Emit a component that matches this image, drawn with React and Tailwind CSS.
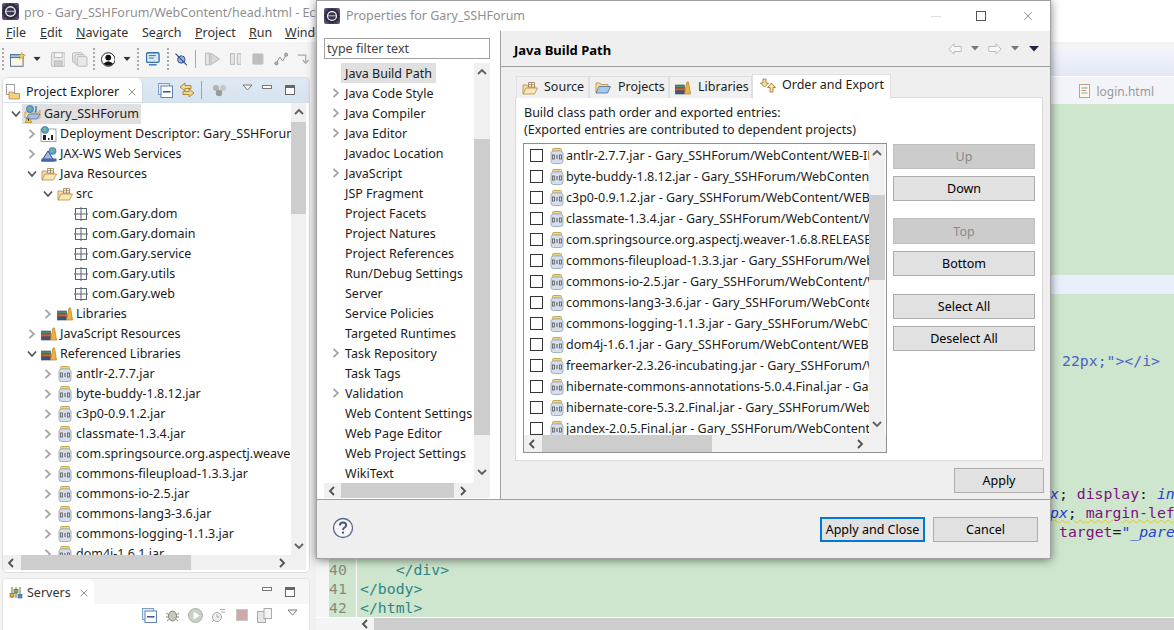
import { X } from 'lucide-react';

// ---------------------------------------------------------------------------
// Icons
// ---------------------------------------------------------------------------

function ChevronRight({ className = '' }) {
  return (
    <svg width="8" height="10" viewBox="0 0 8 10" className={`shrink-0 ${className}`} fill="none">
      <path d="M1.5 1 L6 5 L1.5 9" stroke="#a6a6a6" strokeWidth="1.7" />
    </svg>
  );
}

function ChevronDown({ className = '' }) {
  return (
    <svg width="10" height="8" viewBox="0 0 10 8" className={`shrink-0 ${className}`} fill="none">
      <path d="M1 1.5 L5 6 L9 1.5" stroke="#555" strokeWidth="1.7" />
    </svg>
  );
}

function ArrowGlyph({ dir, dark }) {
  const d = {
    up: 'M1 6 L5 2 L9 6',
    down: 'M1 2 L5 6 L9 2',
    left: 'M6 1 L2 5 L6 9',
    right: 'M2 1 L6 5 L2 9',
  }[dir];
  return (
    <svg width="10" height="10" viewBox="0 0 10 10" fill="none">
      <path d={d} stroke={dark ? '#505050' : '#606060'} strokeWidth="1.8" />
    </svg>
  );
}

function Jar() {
  return (
    <svg width="14" height="16" viewBox="0 0 14 16" className="shrink-0">
      <rect x="2.5" y="0.5" width="9" height="2.5" rx="1" fill="#f0d68a" stroke="#c9a84a" />
      <rect x="1" y="3" width="12" height="12.5" rx="2.5" fill="#d5deea" stroke="#9fb0c6" />
      <rect x="2.5" y="7" width="2" height="4" fill="none" stroke="#555" strokeWidth="0.8" />
      <rect x="6.5" y="7" width="1" height="4" fill="#555" />
      <rect x="9.5" y="7" width="2" height="4" fill="none" stroke="#555" strokeWidth="0.8" />
    </svg>
  );
}

function Books({ className = '' }) {
  return (
    <svg width="16" height="14" viewBox="0 0 16 14" className={`shrink-0 ${className}`}>
      <rect x="0.5" y="4" width="9" height="3" fill="#4a8a78" stroke="#33584f" strokeWidth="0.6" />
      <rect x="0.5" y="7" width="9" height="3" fill="#c0663a" stroke="#7a4126" strokeWidth="0.6" />
      <rect x="0.5" y="10" width="9" height="3" fill="#3b5a88" stroke="#2d4263" strokeWidth="0.6" />
      <path d="M9.5 13 L12 1 L13.5 1 L15.5 13 Z" fill="#eeb243" stroke="#b57d1f" strokeWidth="0.7" />
    </svg>
  );
}

function PackageIcon() {
  return (
    <svg width="14" height="14" viewBox="0 0 14 14" className="shrink-0" fill="none" stroke="#5c6470" strokeWidth="1">
      <rect x="1.5" y="1.5" width="11" height="11" />
      <path d="M7 0 V14 M0 7 H14" />
    </svg>
  );
}

function FolderPkg({ className = '' }) {
  return (
    <svg width="16" height="14" viewBox="0 0 16 14" className={`shrink-0 ${className}`}>
      <path d="M1 13 L1 4 L5 4 L6 5.5 L13 5.5 L13 7 Z" fill="#f4dba4" stroke="#b98d3e" strokeWidth="0.8" />
      <path d="M1 13 L4 7 L15.5 7 L12.5 13 Z" fill="#f8e6b8" stroke="#b98d3e" strokeWidth="0.8" />
      <path d="M6.5 1.5 H12.5 V6 H6.5 Z M9.5 1.5 V6 M6.5 3.7 H12.5" fill="#fff" stroke="#8a6a3a" strokeWidth="0.7" />
    </svg>
  );
}

function Globe({ x = 0, y = 0 }) {
  return (
    <g transform={`translate(${x} ${y})`}>
      <circle cx="4" cy="4" r="3.6" fill="#5a9fd4" stroke="#356a99" strokeWidth="0.6" />
      <path d="M2 2.5 L4.5 2 L5 4 L3 5.5 Z" fill="#7fbf6a" />
    </g>
  );
}

function ProjectIcon() {
  return (
    <svg width="17" height="18" viewBox="0 0 17 18" className="shrink-0">
      <path d="M1 13 L1 7 L6 7 L7 8 L14 8 L16 5 L16 13 Z" fill="#f4dba4" stroke="#b98d3e" strokeWidth="0.7" />
      <path d="M2 14 L5 9 L16 9 L13 14 Z" fill="#a7c0e4" stroke="#4e6f9c" strokeWidth="0.7" />
      <Globe x={2} y={0} />
      <path d="M12 1 V6 Q12 7 10.5 7" stroke="#2e5f9e" strokeWidth="1.2" fill="none" />
      <path d="M4.5 12 L8 17.5 L1 17.5 Z" fill="#f6c33c" stroke="#8a6a10" strokeWidth="0.5" />
      <rect x="4" y="13.5" width="1" height="2.2" fill="#222" />
    </svg>
  );
}

function DescriptorIcon() {
  return (
    <svg width="17" height="16" viewBox="0 0 17 16" className="shrink-0">
      <rect x="1" y="3" width="15" height="12.5" fill="#fff" stroke="#8a8a8a" strokeWidth="0.8" />
      <Globe x={1} y={0} />
      <rect x="3" y="9" width="3" height="5" fill="#222" />
      <rect x="8" y="12" width="1.4" height="2" fill="#222" />
      <rect x="11" y="9" width="2" height="5" fill="#222" />
    </svg>
  );
}

function JaxIcon() {
  return (
    <svg width="16" height="15" viewBox="0 0 16 15" className="shrink-0">
      <path d="M0.5 14 L7 4 L13 14 Z" fill="#9db7df" stroke="#2e4c85" strokeWidth="1" />
      <rect x="0.5" y="11.5" width="15" height="3" fill="#4665a6" />
      <Globe x={7.5} y={0} />
    </svg>
  );
}

function EclipseLogo({ size = 17 }) {
  return (
    <svg width={size} height={size} viewBox="0 0 17 17" className="shrink-0">
      <rect x="0" y="0" width="17" height="17" rx="2" fill="#5a4a80" />
      <circle cx="8.5" cy="8.5" r="7.6" fill="#2f2f3a" strokeDasharray="2 1.4" stroke="#2f2f3a" strokeWidth="1.6" />
      <circle cx="8.5" cy="8.5" r="5.4" fill="#f4f4f4" />
      <circle cx="8.5" cy="8.5" r="4.1" fill="#3a3550" />
      <rect x="3.8" y="7.8" width="9.4" height="1" fill="#c9c9d6" />
    </svg>
  );
}

function Grip({ className = '' }) {
  return <div className={`w-[2px] h-[22px] border-l-2 border-dotted border-[#a8a8a8] ${className}`} />;
}

function MiniDrop({ color = '#333', className = '' }) {
  return (
    <svg width="10" height="6" viewBox="0 0 10 6" className={`shrink-0 ${className}`}>
      <path d="M0 0 H10 L5 5.5 Z" fill={color} />
    </svg>
  );
}

function ViewMenuDrop({ className = '' }) {
  return (
    <svg width="11" height="7" viewBox="0 0 11 7" className={`shrink-0 ${className}`} fill="#fff" stroke="#777">
      <path d="M1 1 H10 L5.5 6 Z" />
    </svg>
  );
}

function MinBtn({ className = '' }) {
  return <div className={`w-[10px] h-[4px] border border-[#777] bg-white ${className}`} />;
}

function MaxBtn({ className = '' }) {
  return <div className={`w-[10px] h-[10px] border border-[#666] border-t-[3px] bg-white ${className}`} />;
}

function CollapseAll({ className = '' }) {
  return (
    <svg width="15" height="15" viewBox="0 0 15 15" className={`shrink-0 ${className}`} fill="none">
      <rect x="0.5" y="0.5" width="11" height="11" fill="#e3ebf5" stroke="#7f9fc6" />
      <rect x="3" y="3" width="11.5" height="11.5" fill="#fff" stroke="#5f82b2" />
      <rect x="5" y="8" width="7.5" height="1.6" fill="#3f5f8f" />
    </svg>
  );
}

function HollowArrow({ flip, className = '' }) {
  return (
    <svg width="14" height="12" viewBox="0 0 14 12" className={`shrink-0 ${flip ? '-scale-x-100' : ''} ${className}`} fill="#f6f6f6" stroke="#bdbdbd">
      <path d="M0.8 6 L6 0.8 V3.5 H13.2 V8.5 H6 V11.2 Z" />
    </svg>
  );
}

// ---------------------------------------------------------------------------
// Main window: left column
// ---------------------------------------------------------------------------

const MENU = [
  ['F', 'ile', 'w-[34px]', ''],
  ['E', 'dit', 'w-[36px]', ''],
  ['N', 'avigate', 'w-[66px]', ''],
  ['Se', 'arch', 'w-[53px]', 'a'],
  ['P', 'roject', 'w-[54px]', ''],
  ['R', 'un', 'w-[36px]', ''],
  ['W', 'indow', 'w-[50px]', ''],
];

const JARS_TREE = [
  'antlr-2.7.7.jar',
  'byte-buddy-1.8.12.jar',
  'c3p0-0.9.1.2.jar',
  'classmate-1.3.4.jar',
  'com.springsource.org.aspectj.weaver-1.6.8.RELEASE.jar',
  'commons-fileupload-1.3.3.jar',
  'commons-io-2.5.jar',
  'commons-lang3-3.6.jar',
  'commons-logging-1.1.3.jar',
  'dom4j-1.6.1.jar',
];

const PACKAGES = ['com.Gary.dom', 'com.Gary.domain', 'com.Gary.service', 'com.Gary.utils', 'com.Gary.web'];

function TreeRow({ indent, arrow, icon, children, selected }) {
  return (
    <div className={`flex items-center h-[20px] whitespace-nowrap ${indent}`}>
      <span className="w-[12px] flex justify-center shrink-0">
        {arrow === 'open' && <ChevronDown />}
        {arrow === 'closed' && <ChevronRight />}
      </span>
      <span className={`flex items-center h-[20px] pl-[2px] pr-[2px] ${selected ? 'bg-[#e0e0e0]' : ''}`}>
        <span className="w-[17px] flex justify-center shrink-0">{icon}</span>
        <span className="ml-[3px]">{children}</span>
      </span>
    </div>
  );
}

function ProjectExplorer() {
  return (
    <div className="ml-[2px] mt-px w-[308px] h-[496px] border border-[#dedede] rounded-[5px] bg-white flex flex-col overflow-hidden">
      <div className="h-[25px] flex bg-gradient-to-b from-[#dfe9f3] to-[#d5e4f0] border-b border-[#d3dfe9] shrink-0">
        <div className="w-[140px] bg-white rounded-tr-[6px] flex items-center pl-[3px] border-r border-[#cddbe6]">
          <svg width="15" height="16" viewBox="0 0 15 16" className="shrink-0 mt-[3px]">
            <rect x="0.5" y="0.5" width="8" height="10" fill="#fff" stroke="#8a8a8a" strokeWidth="0.8" />
            <path d="M3 8 H7 L8 9.5 H13.5 V15 H3 Z" fill="#f3cf83" stroke="#b98d3e" strokeWidth="0.8" />
          </svg>
          <span className="ml-[5px] pt-[4px]">Project Explorer</span>
          <X size={12} strokeWidth={1.3} className="ml-[7px] mt-[3px] text-[#555]" />
        </div>
        <div className="flex items-center flex-1">
          <CollapseAll className="ml-[15px]" />
          <svg width="16" height="16" viewBox="0 0 16 16" className="ml-[6px]" fill="#f3d78f" stroke="#a9802e" strokeWidth="0.9">
            <path d="M1 5 L6 1 V3.5 H12 V6.5 H6 V9 Z" />
            <path d="M15 11 L10 7 V9.5 H4 V12.5 H10 V15 Z" />
          </svg>
          <div className="ml-[6px] w-px h-[18px] bg-[#9aa7b3]" />
          <svg width="15" height="14" viewBox="0 0 15 14" className="ml-[10px]">
            <circle cx="4" cy="5" r="3" fill="#b3b3b3" />
            <circle cx="11" cy="5" r="3" fill="#c7c7c7" />
            <circle cx="7" cy="10" r="3.2" fill="#9a9a9a" />
          </svg>
          <ViewMenuDrop className="ml-[15px] -mt-[6px]" />
          <MinBtn className="ml-[9px] -mt-[6px]" />
          <MaxBtn className="ml-[13px]" />
        </div>
      </div>
      <div className="flex flex-1 min-h-0 pr-[3px]">
        <div className="flex-1 min-w-0 overflow-hidden pl-[7px] pt-[1px]">
          <TreeRow indent="" arrow="open" icon={<ProjectIcon />} selected>Gary_SSHForum</TreeRow>
          <TreeRow indent="ml-[16px]" arrow="closed" icon={<DescriptorIcon />}>Deployment Descriptor: Gary_SSHForum</TreeRow>
          <TreeRow indent="ml-[16px]" arrow="closed" icon={<JaxIcon />}>JAX-WS Web Services</TreeRow>
          <TreeRow indent="ml-[16px]" arrow="open" icon={<FolderPkg />}>Java Resources</TreeRow>
          <TreeRow indent="ml-[32px]" arrow="open" icon={<FolderPkg />}>src</TreeRow>
          {PACKAGES.map((p) => (
            <TreeRow key={p} indent="ml-[48px]" icon={<PackageIcon />}>{p}</TreeRow>
          ))}
          <TreeRow indent="ml-[32px]" arrow="closed" icon={<Books />}>Libraries</TreeRow>
          <TreeRow indent="ml-[16px]" arrow="closed" icon={<Books />}>JavaScript Resources</TreeRow>
          <TreeRow indent="ml-[16px]" arrow="open" icon={<Books />}>Referenced Libraries</TreeRow>
          {JARS_TREE.map((j) => (
            <TreeRow key={j} indent="ml-[32px]" arrow="closed" icon={<Jar />}>{j}</TreeRow>
          ))}
        </div>
        <div className="w-[15px] bg-[#f0f0f0] flex flex-col shrink-0">
          <div className="h-[19px] flex items-center justify-center"><ArrowGlyph dir="up" /></div>
          <div className="h-[92px] bg-[#cdcdcd] shrink-0" />
          <div className="flex-1" />
          <div className="h-[17px] flex items-center justify-center"><ArrowGlyph dir="down" /></div>
        </div>
      </div>
      <div className="h-[15px] bg-[#f0f0f0] flex items-center shrink-0 mr-[3px] mb-[2px]">
        <div className="w-[18px] flex justify-center"><ArrowGlyph dir="left" dark /></div>
        <div className="w-[170px] h-full bg-[#cdcdcd]" />
        <div className="flex-1" />
        <div className="w-[17px] mr-[15px] flex justify-center"><ArrowGlyph dir="right" dark /></div>
      </div>
    </div>
  );
}

function ServersView() {
  return (
    <div className="ml-[2px] mt-[5px] w-[308px] flex-1 border border-[#e3e3e3] border-b-0 rounded-t-[5px] bg-white flex flex-col overflow-hidden">
      <div className="h-[25px] flex bg-[#f6f6f6] shrink-0">
        <div className="w-[91px] bg-white rounded-tr-[6px] flex items-center pl-[6px]">
          <svg width="14" height="14" viewBox="0 0 14 14" className="shrink-0 mt-[3px]">
            <path d="M3 1 V12 M7 1 V12 M11 1 V12" stroke="#666" strokeWidth="1" />
            <rect x="1" y="7.5" width="4" height="3.5" fill="#e0b040" stroke="#7a6020" strokeWidth="0.6" />
            <rect x="5" y="3.5" width="4" height="3.5" fill="#7fb04a" stroke="#4a6a20" strokeWidth="0.6" />
            <rect x="9" y="8.5" width="4" height="3.5" fill="#5a8fcf" stroke="#2a5a90" strokeWidth="0.6" />
          </svg>
          <span className="ml-[4px] pt-[4px] text-[#333]">Servers</span>
          <X size={12} strokeWidth={1.3} className="ml-[7px] mt-[3px] text-[#555]" />
        </div>
        <div className="flex-1 flex items-center justify-end pr-[14px]">
          <MinBtn className="-mt-[6px]" />
          <MaxBtn className="ml-[13px]" />
        </div>
      </div>
      <div className="h-[22px] flex items-center justify-end pr-[11px] shrink-0">
        <CollapseAll />
        <svg width="15" height="15" viewBox="0 0 15 15" className="ml-[8px]">
          <ellipse cx="7.5" cy="8" rx="4" ry="5" fill="#c8c8c0" stroke="#8a8a80" />
          <path d="M1 5 L4 7 M1 9 H3.5 M2 13 L4.5 11 M14 5 L11 7 M14 9 H11.5 M13 13 L10.5 11" stroke="#8a8a80" />
        </svg>
        <svg width="15" height="15" viewBox="0 0 15 15" className="ml-[8px]">
          <circle cx="7.5" cy="7.5" r="7" fill="#c9d0c4" stroke="#a8b0a4" />
          <path d="M5.5 3.5 L11.5 7.5 L5.5 11.5 Z" fill="#fff" />
        </svg>
        <svg width="15" height="15" viewBox="0 0 15 15" className="ml-[8px]" fill="none" stroke="#a8a8a8">
          <circle cx="6" cy="9" r="4.5" fill="#eee" />
          <path d="M6 6.5 V9 H8 M9 1.5 H14 M10 4 H14 M1 14 L3 12" />
        </svg>
        <div className="ml-[10px] w-[12px] h-[12px] bg-[#d0a8a8] border border-[#c6c6c6]" />
        <svg width="15" height="15" viewBox="0 0 15 15" className="ml-[9px]" fill="#e6e6e6" stroke="#aaa">
          <rect x="0.5" y="3.5" width="8" height="11" />
          <rect x="7" y="0.5" width="7.5" height="10" fill="#f4f4f4" />
        </svg>
        <ViewMenuDrop className="ml-[15px] -mt-[5px]" />
      </div>
    </div>
  );
}

function MainToolbar() {
  return (
    <div className="h-[34px] flex items-center bg-[#f5f5f5] shrink-0">
      <Grip className="ml-[2px]" />
      <svg width="16" height="15" viewBox="0 0 16 15" className="ml-[6px]">
        <rect x="0.5" y="2.5" width="13" height="12" fill="#fdf6dc" stroke="#4e6f9c" />
        <rect x="0.5" y="2.5" width="13" height="3" fill="#a7c0e4" stroke="#4e6f9c" />
        <path d="M12 0 L13 2.5 L16 3 L13.5 4.5 L14 7.5 L12 5.5 L10 7.5 L10.5 4.5 L8 3 L11 2.5 Z" fill="#f6d54a" stroke="#b0902a" strokeWidth="0.5" />
      </svg>
      <MiniDrop className="ml-[6px] scale-75" />
      <svg width="15" height="15" viewBox="0 0 15 15" className="ml-[9px]" fill="#e8e8e8" stroke="#bcbcbc">
        <rect x="0.5" y="0.5" width="14" height="14" rx="1" />
        <rect x="3.5" y="0.5" width="8" height="5" fill="#f6f6f6" />
        <rect x="3.5" y="9" width="8" height="5.5" fill="#d0d0d0" />
      </svg>
      <svg width="16" height="15" viewBox="0 0 16 15" className="ml-[7px]" fill="#e8e8e8" stroke="#bcbcbc">
        <rect x="0.5" y="0.5" width="10" height="10" rx="1" />
        <rect x="3" y="2.5" width="10" height="10" rx="1" />
        <rect x="5.5" y="4.5" width="10" height="10" rx="1" />
      </svg>
      <Grip className="ml-[5px]" />
      <svg width="15" height="15" viewBox="0 0 15 15" className="ml-[6px]">
        <circle cx="7.5" cy="7.5" r="7" fill="#fff" stroke="#222" />
        <circle cx="7.5" cy="5.5" r="3" fill="#111" />
        <path d="M2.5 12 Q7.5 6.5 12.5 12 Q7.5 16 2.5 12 Z" fill="#111" />
      </svg>
      <MiniDrop className="ml-[7px] scale-75" />
      <Grip className="ml-[5px]" />
      <svg width="14" height="14" viewBox="0 0 14 14" className="ml-[7px]">
        <rect x="0.5" y="0.5" width="13" height="10" rx="1.5" fill="#dbe8f6" stroke="#2f6fb0" strokeWidth="1.4" />
        <path d="M3 3.5 H10 M3 6 H8" stroke="#2f6fb0" />
        <path d="M3 13 H11" stroke="#2f6fb0" strokeWidth="1.4" />
      </svg>
      <Grip className="ml-[7px]" />
      <svg width="13" height="13" viewBox="0 0 13 13" className="ml-[6px]" fill="none">
        <circle cx="6.5" cy="6.5" r="3.8" fill="#9db7df" stroke="#2e4c85" />
        <path d="M0.5 0.5 L12.5 12.5" stroke="#2e4c85" strokeWidth="1.2" />
      </svg>
      <div className="ml-[8px] w-px h-[18px] bg-[#a8a8a8]" />
      <svg width="16" height="14" viewBox="0 0 16 14" className="ml-[9px]">
        <rect x="0.5" y="1" width="4" height="12" fill="#e6e6e6" stroke="#b8b8b8" />
        <path d="M6 1 L15 7 L6 13 Z" fill="#d8d8d8" stroke="#b8b8b8" />
      </svg>
      <svg width="12" height="12" viewBox="0 0 12 12" className="ml-[9px]" fill="#e6e6e6" stroke="#b8b8b8">
        <rect x="0.5" y="0.5" width="4" height="11" />
        <rect x="7.5" y="0.5" width="4" height="11" />
      </svg>
      <svg width="12" height="12" viewBox="0 0 12 12" className="ml-[11px]">
        <rect x="0.5" y="0.5" width="11" height="11" rx="1" fill="#bdbdbd" stroke="#cfcfcf" />
      </svg>
      <svg width="15" height="14" viewBox="0 0 15 14" className="ml-[10px]" fill="none" stroke="#8a8a8a">
        <path d="M2 12 L6 5 L9 9 L13 2" />
        <circle cx="2.5" cy="11.5" r="1.6" fill="#bbb" />
        <circle cx="12.5" cy="2.5" r="1.6" fill="#bbb" />
      </svg>
      <svg width="14" height="13" viewBox="0 0 14 13" className="ml-[9px]" fill="none" stroke="#a8a8a8" strokeWidth="1.3">
        <path d="M1 2 H9 V9 M6 7 L9 10.5 L12 7" />
      </svg>
    </div>
  );
}

// ---------------------------------------------------------------------------
// Main window: editor (mostly hidden by the dialog)
// ---------------------------------------------------------------------------

const CODE_ROWS = Array.from({ length: 27 }, (_, i) => i + 16);

function CodeText({ n }) {
  if (n === 29) {
    return <span className="pl-[702px] text-[#4a62c8]">22px;&quot;&gt;&lt;/i&gt;</span>;
  }
  if (n === 36) {
    return (
      <span className="pl-[690px]">
        <span className="italic text-[#2a3fd0]">x</span>; <span className="text-[#7f0f7f]">display</span>: <span className="italic text-[#2a3fd0]">in</span>
      </span>
    );
  }
  if (n === 37) {
    return (
      <span className="pl-[690px] underline decoration-wavy decoration-[#e8c620] decoration-1">
        <span className="italic text-[#2a3fd0]">px</span>; <span className="text-[#7f0f7f]">margin-lef</span>
      </span>
    );
  }
  if (n === 38) {
    return (
      <span className="pl-[699px]">
        <span className="text-[#7f0f7f]">target</span>=<span className="italic text-[#2a3fd0]">&quot;_pare</span>
      </span>
    );
  }
  if (n === 40) return <span className="text-[#2f8585] whitespace-pre">    &lt;/div&gt;</span>;
  if (n === 41) return <span className="text-[#2f8585]">&lt;/body&gt;</span>;
  if (n === 42) return <span className="text-[#2f8585]">&lt;/html&gt;</span>;
  return null;
}

function Editor() {
  return (
    <div className="flex-1 min-w-0 flex flex-col">
      <div className="h-[3px] bg-[#f3f3f3]" />
      <div className="h-[31px] bg-gradient-to-b from-[#f4f6fc] to-[#e3e8f5]" />
      <div className="h-px bg-white" />
      <div className="h-[27px] bg-[#f3f4fa] flex items-center justify-end pr-[20px]">
        <svg width="11" height="14" viewBox="0 0 11 14" fill="#fdf8ea" stroke="#b0a890" className="shrink-0">
          <rect x="0.5" y="0.5" width="10" height="13" />
          <path d="M2.5 4 H8.5" stroke="#6a9ad0" />
          <path d="M2.5 6.5 H7" stroke="#d08a7a" />
          <path d="M2.5 9 H8.5" stroke="#7ab08a" />
        </svg>
        <span className="ml-[6px] pt-[2px] text-[12px] text-[#999]">login.html</span>
      </div>
      <div className="font-['DejaVu_Sans_Mono',monospace] text-[14.8px] bg-[#f5f5f5]">
        {CODE_ROWS.map((n) => (
          <div key={n} className={`ml-[13px] h-[19px] leading-[19px] flex ${n === 25 ? 'bg-[#e8f0fc]' : 'bg-[#cde6cd]'}`}>
            <div className="w-[27px] text-[#8a8a7a] bg-[#cde6cd] border-r border-white shrink-0 box-content">{n}</div>
            <div className="pl-[3px] whitespace-pre">
              <CodeText n={n} />
            </div>
          </div>
        ))}
      </div>
      <div className="flex-1 flex bg-[#f4f4f4] border-t border-white">
        <div className="ml-[41px] w-[17px] flex items-center justify-center"><ArrowGlyph dir="left" dark /></div>
        <div className="flex-1 bg-[#cdcdcd]" />
      </div>
    </div>
  );
}

// ---------------------------------------------------------------------------
// Properties dialog
// ---------------------------------------------------------------------------

const PROPERTY_PAGES = [
  ['Java Build Path', false],
  ['Java Code Style', true],
  ['Java Compiler', true],
  ['Java Editor', true],
  ['Javadoc Location', false],
  ['JavaScript', true],
  ['JSP Fragment', false],
  ['Project Facets', false],
  ['Project Natures', false],
  ['Project References', false],
  ['Run/Debug Settings', false],
  ['Server', false],
  ['Service Policies', false],
  ['Targeted Runtimes', false],
  ['Task Repository', true],
  ['Task Tags', false],
  ['Validation', true],
  ['Web Content Settings', false],
  ['Web Page Editor', false],
  ['Web Project Settings', false],
  ['WikiText', false],
];

const BUILD_ENTRIES = [
  'antlr-2.7.7.jar',
  'byte-buddy-1.8.12.jar',
  'c3p0-0.9.1.2.jar',
  'classmate-1.3.4.jar',
  'com.springsource.org.aspectj.weaver-1.6.8.RELEASE.jar',
  'commons-fileupload-1.3.3.jar',
  'commons-io-2.5.jar',
  'commons-lang3-3.6.jar',
  'commons-logging-1.1.3.jar',
  'dom4j-1.6.1.jar',
  'freemarker-2.3.26-incubating.jar',
  'hibernate-commons-annotations-5.0.4.Final.jar',
  'hibernate-core-5.3.2.Final.jar',
  'jandex-2.0.5.Final.jar',
];

function Btn({ children, disabled, className = '' }) {
  return (
    <div
      className={`flex items-center justify-center border pt-[2px] shrink-0 ${
        disabled ? 'bg-[#cccccc] border-[#bfbfbf] text-[#8a8a8a]' : 'bg-[#e1e1e1] border-[#adadad] text-black'
      } ${className}`}
    >
      {children}
    </div>
  );
}

function PropertyTree() {
  return (
    <div className="w-[184px] shrink-0 bg-white border-r border-[#a0a0a0] flex flex-col pl-[7px] pr-[10px] pt-[7px]">
      <div className="h-[21px] border border-[#a0a0a0] flex items-center pl-[2px] pt-[2px] text-[#444] shrink-0">type filter text</div>
      <div className="mt-[4px] h-[420px] flex shrink-0">
        <div className="flex-1 min-w-0 overflow-hidden">
          {PROPERTY_PAGES.map(([label, expandable], i) => (
            <div key={label} className="h-[20px] flex items-center whitespace-nowrap">
              <span className="ml-[8px] w-[9px] flex justify-start shrink-0">{expandable && <ChevronRight />}</span>
              <span className={`h-[20px] flex items-center px-[4px] pt-[2px] ${i === 0 ? 'bg-[#e0e0e0]' : ''}`}>{label}</span>
            </div>
          ))}
        </div>
        <div className="w-[16px] bg-[#f0f0f0] flex flex-col shrink-0">
          <div className="h-[20px] flex items-center justify-center"><ArrowGlyph dir="up" /></div>
          <div className="mt-[56px] h-[296px] bg-[#cdcdcd]" />
          <div className="flex-1" />
          <div className="h-[20px] flex items-center justify-center"><ArrowGlyph dir="down" /></div>
        </div>
      </div>
      <div className="h-[15px] bg-[#f0f0f0] flex items-center shrink-0">
        <div className="w-[17px] flex justify-center"><ArrowGlyph dir="left" dark /></div>
        <div className="w-[113px] h-full bg-[#cdcdcd]" />
        <div className="ml-[5px] w-[10px] flex justify-center"><ArrowGlyph dir="right" dark /></div>
      </div>
    </div>
  );
}

function BuildTabs() {
  const tab = 'h-[22px] flex items-center bg-[#f0f0f0] border border-b-0 border-[#e0e0e0] pl-[5px] shrink-0';
  return (
    <div className="mt-[7px] ml-[15px] h-[24px] flex items-end relative z-10">
      <div className={`${tab} w-[73px]`}>
        <FolderPkg />
        <span className="ml-[6px]">Source</span>
      </div>
      <div className={`${tab} w-[80px]`}>
        <svg width="16" height="13" viewBox="0 0 16 13" className="shrink-0">
          <path d="M1 12 V2 H5 L6 3.5 H13 V6 Z" fill="#f4dba4" stroke="#b98d3e" strokeWidth="0.8" />
          <path d="M1 12 L4 5.5 H15.5 L12.5 12 Z" fill="#a7c8ea" stroke="#4e6f9c" strokeWidth="0.8" />
        </svg>
        <span className="ml-[7px]">Projects</span>
      </div>
      <div className={`${tab} w-[83px]`}>
        <Books />
        <span className="ml-[7px]">Libraries</span>
      </div>
      <div className="h-[25px] w-[139px] flex items-center bg-white border border-b-0 border-[#e0e0e0] pl-[7px] pb-[3px] shrink-0 -mb-px">
        <svg width="16" height="15" viewBox="0 0 16 15" fill="#f8e2a8" stroke="#a67c2a" strokeWidth="0.9" className="shrink-0">
          <path d="M3 1 H6 V5 H8.5 L4.5 9 L0.5 5 H3 Z" />
          <path d="M11.5 5 L15.5 9.5 H13 V14 H10 V9.5 H7.5 Z" />
        </svg>
        <span className="ml-[6px]">Order and Export</span>
      </div>
    </div>
  );
}

function EntryList() {
  return (
    <div className="w-[364px] h-[310px] border border-[#8f8f8f] flex flex-col shrink-0">
      <div className="flex h-[291px] shrink-0">
        <div className="flex-1 min-w-0 overflow-hidden pt-px">
          {BUILD_ENTRIES.map((name) => (
            <div key={name} className="h-[21px] flex items-center pl-[6px] whitespace-nowrap">
              <span className="w-[13px] h-[13px] border border-[#333] bg-white shrink-0" />
              <span className="ml-[7px] flex"><Jar /></span>
              <span className="ml-[2px] pt-[2px] flex-1 min-w-0 overflow-hidden">{name} - Gary_SSHForum/WebContent/WEB-INF/lib</span>
            </div>
          ))}
        </div>
        <div className="w-[16px] bg-[#f0f0f0] flex flex-col shrink-0 mr-px">
          <div className="h-[20px] flex items-center justify-center"><ArrowGlyph dir="up" /></div>
          <div className="mt-[31px] h-[85px] bg-[#cdcdcd]" />
          <div className="flex-1" />
          <div className="h-[20px] flex items-center justify-center"><ArrowGlyph dir="down" /></div>
        </div>
      </div>
      <div className="flex-1 bg-[#f0f0f0] flex items-center">
        <div className="w-[18px] flex justify-center"><ArrowGlyph dir="left" dark /></div>
        <div className="w-[170px] h-full bg-[#cdcdcd]" />
        <div className="flex-1" />
        <div className="w-[17px] mr-[17px] flex justify-center"><ArrowGlyph dir="right" dark /></div>
      </div>
    </div>
  );
}

function PropertiesDialog() {
  return (
    <div className="absolute left-[316px] top-0 w-[735px] h-[559px] bg-[#efefef] border border-[#a0a0a0] shadow-[0_1px_9px_rgba(0,0,0,0.5)] flex flex-col">
      <div className="h-[30px] bg-white flex items-center shrink-0">
        <div className="ml-[7px]"><EclipseLogo size={16} /></div>
        <span className="ml-[6px] text-[#8f8f8f]">Properties for Gary_SSHForum</span>
        <div className="flex-1" />
        <div className="w-[10px] h-px bg-[#dcdcdc] mr-[35px]" />
        <div className="w-[10px] h-[10px] border border-[#555] mr-[35px]" />
        <X size={14} strokeWidth={1} className="text-[#444] mr-[15px]" />
      </div>
      <div className="flex h-[468px] shrink-0">
        <PropertyTree />
        <div className="flex-1 min-w-0 flex flex-col">
          <div className="h-[36px] border-b border-[#a0a0a0] flex items-center shrink-0">
            <span className="ml-[13px] pt-[4px] font-bold text-[13px] text-black">Java Build Path</span>
            <div className="flex-1" />
            <HollowArrow />
            <MiniDrop color="#777" className="ml-[9px] w-[8px] h-[5px]" />
            <HollowArrow flip className="ml-[9px]" />
            <MiniDrop color="#777" className="ml-[9px] w-[8px] h-[5px]" />
            <MiniDrop color="#2f1f4f" className="ml-[10px] mr-[11px]" />
          </div>
          <BuildTabs />
          <div className="ml-[14px] w-[528px] h-[364px] bg-white border border-[#d9d9d9] px-[7px] pt-[6px] shrink-0 -mt-px">
            <div className="leading-[17px] pl-px">Build class path order and exported entries:</div>
            <div className="leading-[17px] pl-px">(Exported entries are contributed to dependent projects)</div>
            <div className="mt-[5px] flex gap-[6px]">
              <EntryList />
              <div className="w-[142px] flex flex-col pt-px">
                <Btn disabled className="h-[25px]">Up</Btn>
                <Btn className="h-[25px] mt-[7px]">Down</Btn>
                <Btn disabled className="h-[26px] mt-[17px]">Top</Btn>
                <Btn className="h-[25px] mt-[7px]">Bottom</Btn>
                <Btn className="h-[25px] mt-[18px]">Select All</Btn>
                <Btn className="h-[25px] mt-[7px]">Deselect All</Btn>
              </div>
            </div>
          </div>
          <div className="flex justify-end pr-[6px] mt-[7px]">
            <Btn className="w-[90px] h-[25px]">Apply</Btn>
          </div>
        </div>
      </div>
      <div className="flex-1 border-t border-[#a0a0a0] flex items-center">
        <svg width="22" height="22" viewBox="0 0 22 22" className="ml-[15px] mb-[2px]" fill="none">
          <circle cx="11" cy="11" r="9.5" stroke="#5c6a8a" strokeWidth="1.3" fill="#f6f6fa" />
          <path d="M7.8 8.5 Q8 5.5 11 5.5 Q14.2 5.5 14.2 8.3 Q14.2 10 12 11 Q11 11.6 11 13" stroke="#4a5878" strokeWidth="2" />
          <rect x="10" y="14.6" width="2" height="2" fill="#4a5878" />
        </svg>
        <div className="flex-1" />
        <Btn className="w-[105px] h-[25px] !border-2 !border-[#0078d7] mr-[8px]">Apply and Close</Btn>
        <Btn className="w-[105px] h-[25px] mr-[12px]">Cancel</Btn>
      </div>
    </div>
  );
}

// ---------------------------------------------------------------------------
// Page
// ---------------------------------------------------------------------------

export default function App() {
  return (
    <div className="relative w-[1174px] h-[630px] overflow-hidden bg-white font-['Noto_Sans',sans-serif] text-[12.5px] text-[#1c1c1c] flex flex-col">
      {/* Title bar */}
      <div className="h-[22px] flex items-center pl-[2px] shrink-0">
        <EclipseLogo />
        <span className="ml-[5px] pt-[4px] text-[#8f8f8f]">pro - Gary_SSHForum/WebContent/head.html - Eclipse IDE</span>
      </div>

      {/* Menu */}
      <div className="h-[20px] flex items-center pl-[6px] pt-[2px] shrink-0 text-[#333]">
        {MENU.map(([first, rest, width, under]) => (
          <span key={first} className={width}>
            {under ? (
              <>Se<u>a</u>rch</>
            ) : (
              <><u>{first}</u>{rest}</>
            )}
          </span>
        ))}
      </div>

      <div className="flex-1 min-h-0 flex">
        {/* Left column */}
        <div className="w-[316px] shrink-0 bg-[#f3f3f3] flex flex-col border-r-[5px] border-[#f0f0f0]">
          <MainToolbar />
          <ProjectExplorer />
          <ServersView />
        </div>
        <Editor />
      </div>

      <PropertiesDialog />
    </div>
  );
}
